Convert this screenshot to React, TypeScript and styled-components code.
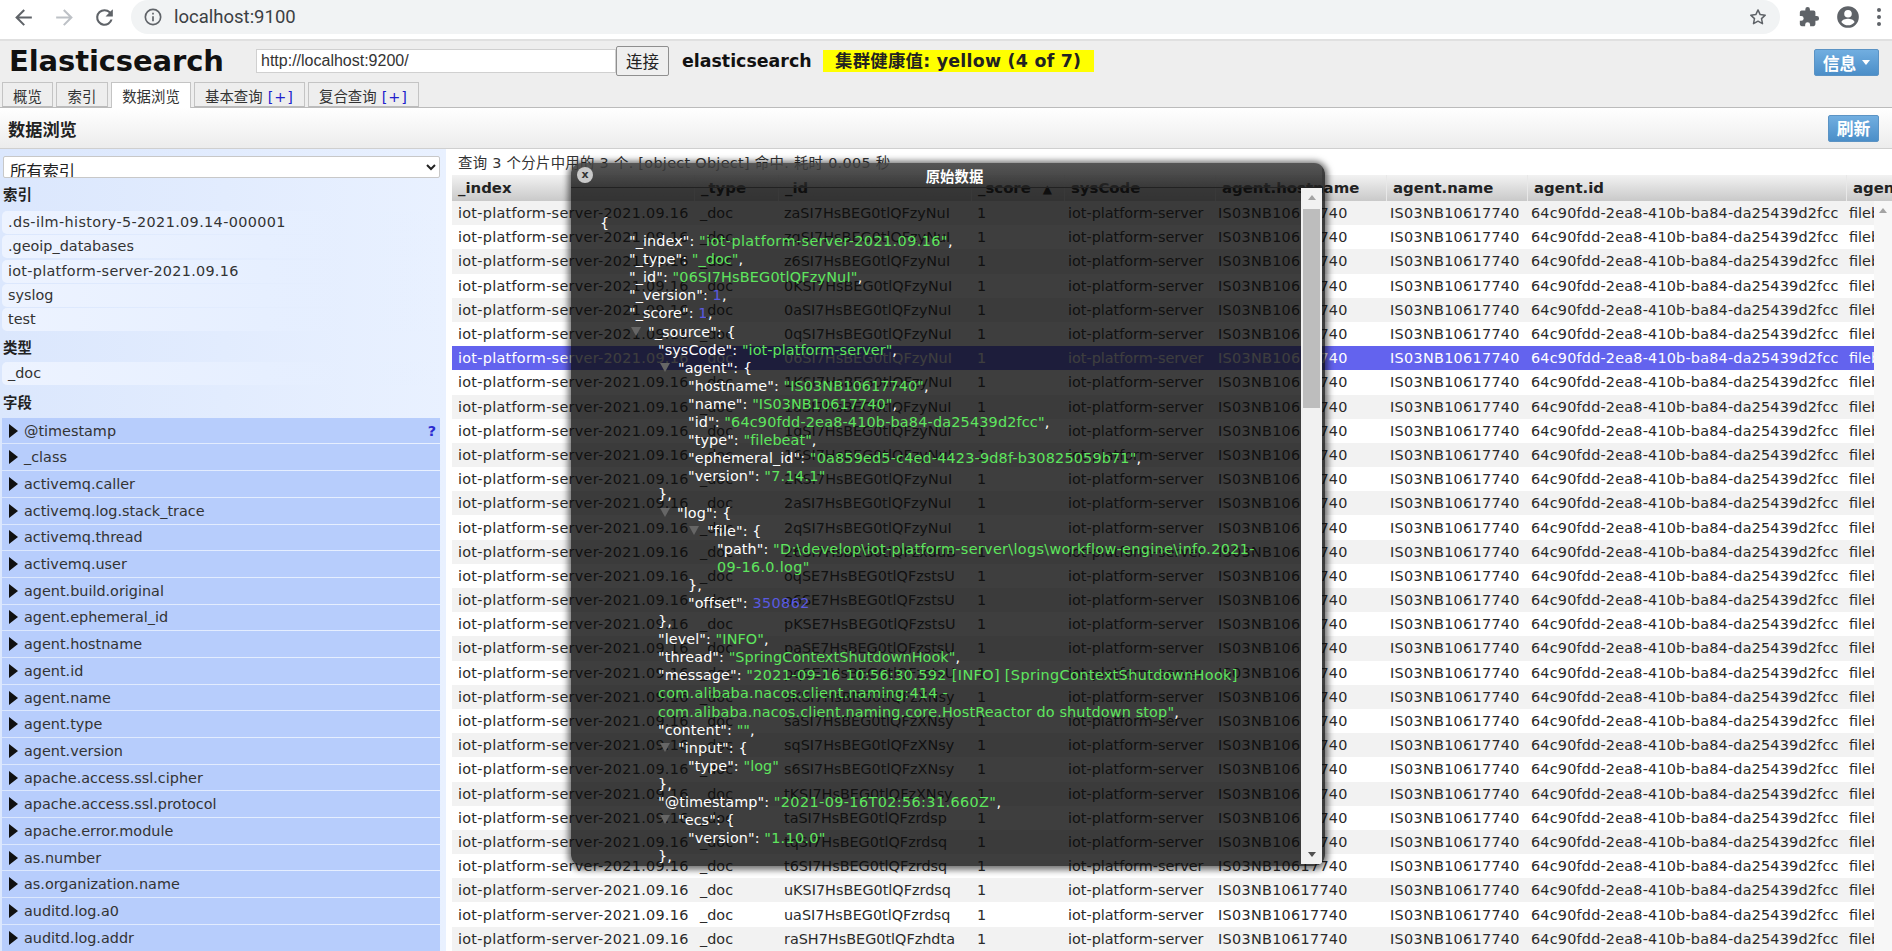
import React from "react";
import styled, { createGlobalStyle } from "styled-components";

const UI = `"DejaVu Sans", Verdana, "Noto Sans CJK SC", sans-serif`;
const CJK = `"Noto Sans CJK SC", "DejaVu Sans", sans-serif`;
const ROW = 750 / 31;

const Global = createGlobalStyle`
  html, body { margin: 0; padding: 0; height: 100%; overflow: hidden; background: #fff; }
  #root { height: 100%; }
  * { box-sizing: border-box; }
`;

const Page = styled.div`
  position: relative;
  width: 1892px;
  height: 951px;
  overflow: hidden;
  display: flex;
  flex-direction: column;
  font-family: ${UI};
  font-size: 14.4px;
  color: #2a2a2a;
`;

const BrowserBar = styled.div`
  height: 41px;
  flex: none;
  display: flex;
  align-items: flex-start;
  background: #fff;
  border-bottom: 2px solid #e0e0e0;
`;
const NavGroup = styled.div`
  width: 131px;
  height: 34px;
  flex: none;
  display: flex;
  align-items: center;
  gap: 15.5px;
  padding-left: 11px;
`;
const Omnibox = styled.div`
  width: 1649px;
  height: 34px;
  flex: none;
  display: flex;
  align-items: center;
  background: #f1f3f4;
  border-radius: 17px;
  padding: 0 12px 0 12px;
`;
const OmniText = styled.span`
  margin-left: 11px;
  flex: 1;
  font: 18.5px Roboto, "Liberation Sans", sans-serif;
  color: #3c4043;
`;
const ChromeActions = styled.div`
  flex: 1;
  height: 34px;
  display: flex;
  align-items: center;
  gap: 15px;
  padding-left: 18px;
`;

const TopBar = styled.div`
  height: 41px;
  flex: none;
  display: flex;
  align-items: center;
  background: #eeeeee;
  padding: 0 13px 1px 9px;
`;
const Brand = styled.h1`
  margin: 0 28px 0 0;
  width: 219px;
  flex: none;
  font: bold 29px ${UI};
  letter-spacing: -0.1px;
  color: #111;
  white-space: nowrap;
`;
const UrlInput = styled.input`
  width: 360px;
  height: 24px;
  flex: none;
  border: 1px solid #d0d0d0;
  background: #fff;
  padding: 0 4px;
  font: 16px "Liberation Sans", sans-serif;
  color: #333;
`;
const ConnectBtn = styled.button`
  width: 53px;
  height: 30px;
  flex: none;
  margin-right: 13px;
  border: 1px solid #8f8f8f;
  border-radius: 2px;
  background: #efefef;
  font: 16.5px ${CJK};
  color: #222;
  padding: 0;
`;
const ClusterName = styled.span`
  width: 141px;
  flex: none;
  font: bold 17.4px ${UI};
  color: #111;
`;
const Health = styled.span`
  width: 271px;
  height: 22px;
  flex: none;
  background: #ffff00;
  padding-left: 12px;
  font: bold 17.4px/22px "DejaVu Sans", "Noto Sans CJK SC", sans-serif;
  letter-spacing: 0.25px;
  color: #222;
  white-space: nowrap;
`;
const BlueBtn = styled.button<{ $w: number; $h: number; $drop?: number }>`
  width: ${(p) => p.$w}px;
  height: ${(p) => p.$h}px;
  margin-left: auto;
  margin-top: ${(p) => p.$drop ?? 0}px;
  flex: none;
  border: 1px solid #5b93c4;
  border-radius: 2px;
  background: linear-gradient(to bottom, #71aee0, #4b8ec8);
  color: #fff;
  font: bold 16.8px ${CJK};
  padding: 0;
  display: flex;
  align-items: center;
  justify-content: center;
  gap: 6px;
`;
const Caret = styled.span`
  width: 0;
  height: 0;
  border-left: 4px solid transparent;
  border-right: 4px solid transparent;
  border-top: 5px solid #fff;
`;

const TabRow = styled.div`
  height: 26px;
  flex: none;
  display: flex;
  align-items: flex-end;
  background: #eeeeee;
  border-bottom: 1px solid #bbb;
  padding-left: 2px;
  gap: 3px;
`;
const Tab = styled.div<{ $w: number; $active?: boolean }>`
  width: ${(p) => p.$w}px;
  height: ${(p) => (p.$active ? 26 : 25)}px;
  margin-bottom: ${(p) => (p.$active ? -1 : 0)}px;
  background: ${(p) => (p.$active ? "#fff" : "#eeeeee")};
  border: 1px solid #c4c4c4;
  border-bottom: ${(p) => (p.$active ? "none" : "1px solid #bbb")};
  text-align: center;
  font: 14.4px/25px ${CJK};
  color: #333;
  white-space: nowrap;
`;
const Plus = styled.span`
  color: #2222cc;
  margin-left: 5px;
  letter-spacing: 1px;
  font-family: "DejaVu Sans", sans-serif;
`;

const SectionBar = styled.div`
  height: 41px;
  flex: none;
  display: flex;
  align-items: center;
  padding: 0 13px 0 8px;
  background: linear-gradient(to bottom, #ffffff, #ececec);
  border-bottom: 1px solid #cfcfcf;
`;
const SectionTitle = styled.h2`
  margin: 0;
  font: bold 17.2px ${CJK};
  color: #222;
`;

const Body = styled.div`
  flex: 1;
  min-height: 0;
  display: flex;
`;
const Sidebar = styled.div`
  width: 446px;
  flex: none;
  padding: 7px 6px 0 2px;
  background: linear-gradient(to right, #dbe7fd, #e9f1ff);
  overflow: hidden;
`;
const IndexSelect = styled.select`
  width: 437px;
  height: 22px;
  margin-left: 1px;
  display: block;
  border: 1px solid #c8c8c8;
  border-radius: 2px;
  background: #fff;
  padding: 0 2px;
  font: 16.3px/20px ${CJK};
  color: #222;
`;
const SideLabel = styled.div<{ $h?: number }>`
  height: ${(p) => p.$h ?? 33}px;
  padding: 0 0 2px 1px;
  display: flex;
  align-items: center;
  font: bold 14.4px ${CJK};
  color: #222;
`;
const SideItem = styled.div<{ $ls?: number }>`
  height: 23px;
  margin-bottom: 1.3px;
  padding-left: 6px;
  border-radius: 5px 0 0 5px;
  background: linear-gradient(to right, #edf3ff, #e6efff 60%, rgba(230, 239, 255, 0));
  font-size: 14.4px;
  letter-spacing: ${(p) => p.$ls ?? 0}px;
  line-height: 23px;
  color: #333;
  white-space: nowrap;
`;
const FieldRow = styled.div`
  height: 25.7px;
  margin-bottom: 1px;
  width: 438px;
  display: flex;
  align-items: center;
  padding: 0 4px 0 7px;
  background: #b7cdfc;
  font-size: 14.4px;
  color: #333;
`;
const FieldArrow = styled.span`
  width: 0;
  height: 0;
  flex: none;
  margin-right: 6px;
  border-top: 7px solid transparent;
  border-bottom: 7px solid transparent;
  border-left: 9px solid #111;
`;
const FieldHelp = styled.span`
  margin-left: auto;
  font-weight: bold;
  color: #2a2ad0;
`;

const Main = styled.div`
  flex: 1;
  min-width: 0;
  padding-left: 6px;
  display: flex;
  flex-direction: column;
  background: #fff;
`;
const QueryInfo = styled.div`
  height: 26px;
  padding: 3px 0 0 6px;
  font: 14.4px/22px "DejaVu Sans", "Noto Sans CJK SC", sans-serif;
  letter-spacing: 0.3px;
  color: #333;
  white-space: nowrap;
`;
const HeadRow = styled.div`
  height: 26px;
  flex: none;
  display: grid;
  grid-template-columns: 242px 84px 193px 93px 151px 171px 141px 319px 60px;
  background: linear-gradient(to bottom, #f2f2f2, #c9c9c9);
  overflow: hidden;
`;
const HeadCell = styled.div<{ $first?: boolean }>`
  padding-left: 6px;
  border-left: ${(p) => (p.$first ? "none" : "1px solid #e8e8e8")};
  font-weight: bold;
  line-height: 26px;
  color: #222;
  white-space: nowrap;
  font-size: 14.9px;
`;
const SortMark = styled.span`
  margin-left: 12px;
  font-size: 12px;
`;
const TableScroller = styled.div`
  flex: 1;
  min-height: 0;
  display: flex;
`;
const Rows = styled.div`
  flex: 1;
  min-width: 0;
  overflow: hidden;
`;
const DataRow = styled.div<{ $selected?: boolean; $odd?: boolean }>`
  height: ${ROW}px;
  display: grid;
  grid-template-columns: 244px 84px 193px 91px 150px 172px 141px 318px 29px;
  align-items: center;
  white-space: nowrap;
  background: ${(p) => (p.$selected ? "#6363ee" : p.$odd ? "#f2f2f2" : "#fff")};
  color: ${(p) => (p.$selected ? "#fff" : "#2a2a2a")};
`;
const DataCell = styled.div<{ $first?: boolean; $ls?: number }>`
  padding-left: ${(p) => (p.$first ? 6 : 4)}px;
  letter-spacing: ${(p) => p.$ls ?? 0}px;
  overflow: hidden;
`;
const VTrack = styled.div`
  width: 18px;
  flex: none;
  background: #f7f7f7;
  display: flex;
  flex-direction: column;
  align-items: center;
  padding: 7px 0;
`;
const VArrow = styled.span<{ $up: boolean; $tone: string }>`
  width: 0;
  height: 0;
  border-left: 4.5px solid transparent;
  border-right: 4.5px solid transparent;
  ${(p) =>
    p.$up
      ? `border-bottom: 5px solid ${p.$tone};`
      : `border-top: 5px solid ${p.$tone};`}
`;

const Dialog = styled.div`
  position: absolute;
  left: 571px;
  top: 163px;
  width: 754px;
  height: 703px;
  border-radius: 11px;
  background: rgba(10, 10, 10, 0.79);
  box-shadow: 0 1px 6px 3px rgba(0, 0, 0, 0.55);
  display: flex;
  flex-direction: column;
  padding-right: 3px;
  overflow: hidden;
`;
const DialogHead = styled.div`
  height: 25px;
  flex: none;
  display: flex;
  align-items: center;
  justify-content: center;
  position: relative;
  padding-left: 16px;
  background: linear-gradient(to bottom, rgba(110, 110, 110, 0.5), rgba(60, 60, 60, 0.35));
  border-bottom: 1px solid #222;
  color: #fff;
  font: bold 14.4px ${CJK};
`;
const CloseDot = styled.span`
  position: absolute;
  left: 6px;
  top: 4px;
  width: 16px;
  height: 16px;
  border-radius: 50%;
  background: #c9c9c9;
  color: #333;
  font: bold 11px/15px ${UI};
  text-align: center;
`;
const DialogBody = styled.div`
  flex: 1;
  min-height: 0;
  display: flex;
  padding-bottom: 2px;
`;
const JsonPane = styled.div`
  flex: 1;
  min-width: 0;
  overflow: hidden;
  padding: 26px 0 0 29px;
  font-size: 14.4px;
  letter-spacing: 0.08px;
  line-height: 18.1px;
  color: #fff;
  white-space: pre;
`;
const JsonLine = styled.div<{ $indent: number }>`
  position: relative;
  padding-left: ${(p) => p.$indent}px;
`;
const Fold = styled.span<{ $at: number }>`
  position: absolute;
  left: ${(p) => p.$at}px;
  top: 4px;
  width: 0;
  height: 0;
  border-left: 5px solid transparent;
  border-right: 5px solid transparent;
  border-top: 9px solid #666;
`;
const Str = styled.span<{ $ls?: number }>`
  color: #5ee65e;
  letter-spacing: ${(p) => p.$ls ?? 0.08}px;
`;
const Num = styled.span`
  color: #5a5ae0;
  letter-spacing: 0.4px;
`;
const DlgTrack = styled.div`
  width: 21px;
  flex: none;
  background: #f1f1f1;
  padding: 7px 2px;
  display: flex;
  flex-direction: column;
  align-items: center;
`;
const DlgThumb = styled.div`
  width: 17px;
  height: 199px;
  margin: 9px 0 auto;
  background: #bdbdbd;
`;

const ids = [
  "zaSI7HsBEG0tlQFzyNuI", "zqSI7HsBEG0tlQFzyNuI", "z6SI7HsBEG0tlQFzyNuI", "0KSI7HsBEG0tlQFzyNuI",
  "0aSI7HsBEG0tlQFzyNuI", "0qSI7HsBEG0tlQFzyNuI", "06SI7HsBEG0tlQFzyNuI", "1KSI7HsBEG0tlQFzyNuI",
  "1aSI7HsBEG0tlQFzyNuI", "1qSI7HsBEG0tlQFzyNuI", "16SI7HsBEG0tlQFzyNuI", "2KSI7HsBEG0tlQFzyNuI",
  "2aSI7HsBEG0tlQFzyNuI", "2qSI7HsBEG0tlQFzyNuI", "26SI7HsBEG0tlQFzxduB", "oqSE7HsBEG0tlQFzstsU",
  "o6SE7HsBEG0tlQFzstsU", "pKSE7HsBEG0tlQFzstsU", "paSE7HsBEG0tlQFzstsU", "pqSE7HsBEG0tlQFzstsU",
  "sKSI7HsBEG0tlQFzXNsy", "saSI7HsBEG0tlQFzXNsy", "sqSI7HsBEG0tlQFzXNsy", "s6SI7HsBEG0tlQFzXNsy",
  "tKSI7HsBEG0tlQFzXNsy", "taSI7HsBEG0tlQFzrdsp", "tqSI7HsBEG0tlQFzrdsq", "t6SI7HsBEG0tlQFzrdsq",
  "uKSI7HsBEG0tlQFzrdsq", "uaSI7HsBEG0tlQFzrdsq", "raSH7HsBEG0tlQFzhdta",
];

const fields = [
  "@timestamp", "_class", "activemq.caller", "activemq.log.stack_trace", "activemq.thread",
  "activemq.user", "agent.build.original", "agent.ephemeral_id", "agent.hostname", "agent.id",
  "agent.name", "agent.type", "agent.version", "apache.access.ssl.cipher",
  "apache.access.ssl.protocol", "apache.error.module", "as.number", "as.organization.name",
  "auditd.log.a0", "auditd.log.addr",
];

type Seg = { k?: string; s?: string; n?: string; t?: string; ls?: number };
type Line = { i: number; fold?: number; segs: Seg[] };

const jsonLines: Line[] = [
  { i: 0, segs: [{ t: "{" }] },
  { i: 29, segs: [{ k: '"_index": ' }, { s: '"iot-platform-server-2021.09.16"', ls: 0.42 }, { t: "," }] },
  { i: 29, segs: [{ k: '"_type": ' }, { s: '"_doc"' }, { t: "," }] },
  { i: 29, segs: [{ k: '"_id": ' }, { s: '"06SI7HsBEG0tlQFzyNuI"', ls: 0.18 }, { t: "," }] },
  { i: 29, segs: [{ k: '"_version": ' }, { n: "1" }, { t: "," }] },
  { i: 29, segs: [{ k: '"_score": ' }, { n: "1" }, { t: "," }] },
  { i: 48, fold: 31, segs: [{ k: '"_source": {' }] },
  { i: 58, segs: [{ k: '"sysCode": ' }, { s: '"iot-platform-server"' }, { t: "," }] },
  { i: 78, fold: 60, segs: [{ k: '"agent": {' }] },
  { i: 88, segs: [{ k: '"hostname": ' }, { s: '"IS03NB10617740"', ls: 0.1 }, { t: "," }] },
  { i: 88, segs: [{ k: '"name": ' }, { s: '"IS03NB10617740"', ls: 0.1 }, { t: "," }] },
  { i: 88, segs: [{ k: '"id": ' }, { s: '"64c90fdd-2ea8-410b-ba84-da25439d2fcc"', ls: 0.18 }, { t: "," }] },
  { i: 88, segs: [{ k: '"type": ' }, { s: '"filebeat"' }, { t: "," }] },
  { i: 88, segs: [{ k: '"ephemeral_id": ' }, { s: '"0a859ed5-c4ed-4423-9d8f-b30825059b71"', ls: 0.18 }, { t: "," }] },
  { i: 88, segs: [{ k: '"version": ' }, { s: '"7.14.1"', ls: 0.3 }] },
  { i: 58, segs: [{ t: "}," }] },
  { i: 77, fold: 60, segs: [{ k: '"log": {' }] },
  { i: 107, fold: 89, segs: [{ k: '"file": {' }] },
  { i: 117, segs: [{ k: '"path": ' }, { s: '"D:\\develop\\iot-platform-server\\logs\\workflow-engine\\info.2021-\n09-16.0.log"', ls: 0.33 }] },
  { i: 88, segs: [{ t: "}," }] },
  { i: 88, segs: [{ k: '"offset": ' }, { n: "350862" }] },
  { i: 58, segs: [{ t: "}," }] },
  { i: 58, segs: [{ k: '"level": ' }, { s: '"INFO"' }, { t: "," }] },
  { i: 58, segs: [{ k: '"thread": ' }, { s: '"SpringContextShutdownHook"' }, { t: "," }] },
  {
    i: 58,
    segs: [
      { k: '"message": ' },
      { s: '"2021-09-16 10:56:30.592 [INFO] [SpringContextShutdownHook]\n', ls: 0.38 },
      { s: "com.alibaba.nacos.client.naming:414 -\n", ls: 0.28 },
      { s: 'com.alibaba.nacos.client.naming.core.HostReactor do shutdown stop"', ls: 0.16 },
      { t: "," },
    ],
  },
  { i: 58, segs: [{ k: '"content": ' }, { s: '""' }, { t: "," }] },
  { i: 78, fold: 60, segs: [{ k: '"input": {' }] },
  { i: 88, segs: [{ k: '"type": ' }, { s: '"log"' }] },
  { i: 58, segs: [{ t: "}," }] },
  { i: 58, segs: [{ k: '"@timestamp": ' }, { s: '"2021-09-16T02:56:31.660Z"', ls: 0.4 }, { t: "," }] },
  { i: 78, fold: 60, segs: [{ k: '"ecs": {' }] },
  { i: 88, segs: [{ k: '"version": ' }, { s: '"1.10.0"', ls: 0.3 }] },
  { i: 58, segs: [{ t: "}," }] },
];

const Icon = styled.svg<{ $flip?: boolean }>`
  display: block;
  flex: none;
  transform: ${(p) => (p.$flip ? "scaleX(-1)" : "none")};
`;

const BackIcon = ({ color, flip }: { color: string; flip?: boolean }) => (
  <Icon width="25" height="25" viewBox="0 0 24 24" $flip={flip}>
    <path d="M20 11H7.8l5.6-5.6L12 4l-8 8 8 8 1.4-1.4L7.8 13H20z" fill={color} />
  </Icon>
);
const ReloadIcon = () => (
  <Icon width="25" height="25" viewBox="0 0 24 24">
    <path
      d="M17.65 6.35A7.96 7.96 0 0 0 12 4a8 8 0 1 0 7.73 10h-2.08A6 6 0 1 1 12 6c1.66 0 3.14.69 4.22 1.78L13 11h7V4z"
      fill="#5f6368"
    />
  </Icon>
);
const InfoIcon = () => (
  <Icon width="20" height="20" viewBox="0 0 24 24">
    <circle cx="12" cy="12" r="9.2" fill="none" stroke="#5f6368" strokeWidth="2" />
    <path d="M11 7h2v2h-2zM11 11h2v6h-2z" fill="#5f6368" />
  </Icon>
);
const StarIcon = () => (
  <Icon width="20" height="20" viewBox="0 0 24 24">
    <path
      d="M12 3.5l2.6 5.6 6.1.7-4.5 4.2 1.2 6-5.4-3-5.4 3 1.2-6-4.5-4.2 6.1-.7z"
      fill="none"
      stroke="#5f6368"
      strokeWidth="1.8"
      strokeLinejoin="round"
    />
  </Icon>
);
const PuzzleIcon = () => (
  <Icon width="22" height="22" viewBox="0 0 24 24">
    <path
      d="M20.5 11H19V7a2 2 0 0 0-2-2h-4V3.5a2.5 2.5 0 0 0-5 0V5H4a2 2 0 0 0-2 2v3.8h1.5a2.7 2.7 0 0 1 0 5.4H2V20a2 2 0 0 0 2 2h3.8v-1.5a2.7 2.7 0 0 1 5.4 0V22H17a2 2 0 0 0 2-2v-4h1.5a2.5 2.5 0 0 0 0-5z"
      fill="#5f6368"
    />
  </Icon>
);
const AccountIcon = () => (
  <Icon width="26" height="26" viewBox="0 0 24 24">
    <path
      d="M12 2a10 10 0 1 0 0 20 10 10 0 0 0 0-20zm0 3.5a3.5 3.5 0 1 1 0 7 3.5 3.5 0 0 1 0-7zm0 14.2a7.7 7.7 0 0 1-6-2.9c.03-2 4-3.1 6-3.1s5.97 1.1 6 3.1a7.7 7.7 0 0 1-6 2.9z"
      fill="#5f6368"
    />
  </Icon>
);
const DotsIcon = () => (
  <Icon width="6" height="20" viewBox="0 0 6 20">
    <circle cx="3" cy="3" r="2" fill="#5f6368" />
    <circle cx="3" cy="10" r="2" fill="#5f6368" />
    <circle cx="3" cy="17" r="2" fill="#5f6368" />
  </Icon>
);

export default function App() {
  return (
    <Page>
      <Global />
      <BrowserBar>
        <NavGroup>
          <BackIcon color="#5f6368" />
          <BackIcon color="#bdc1c6" flip />
          <ReloadIcon />
        </NavGroup>
        <Omnibox>
          <InfoIcon />
          <OmniText>localhost:9100</OmniText>
          <StarIcon />
        </Omnibox>
        <ChromeActions>
          <PuzzleIcon />
          <AccountIcon />
          <DotsIcon />
        </ChromeActions>
      </BrowserBar>

      <TopBar>
        <Brand>Elasticsearch</Brand>
        <UrlInput defaultValue="http://localhost:9200/" />
        <ConnectBtn>连接</ConnectBtn>
        <ClusterName>elasticsearch</ClusterName>
        <Health>集群健康值: yellow (4 of 7)</Health>
        <BlueBtn $w={65} $h={27} $drop={3}>
          信息 <Caret />
        </BlueBtn>
      </TopBar>

      <TabRow>
        <Tab $w={51}>概览</Tab>
        <Tab $w={52}>索引</Tab>
        <Tab $w={80} $active>
          数据浏览
        </Tab>
        <Tab $w={111}>
          基本查询<Plus>[+]</Plus>
        </Tab>
        <Tab $w={111}>
          复合查询<Plus>[+]</Plus>
        </Tab>
      </TabRow>

      <SectionBar>
        <SectionTitle>数据浏览</SectionTitle>
        <BlueBtn $w={51} $h={27}>
          刷新
        </BlueBtn>
      </SectionBar>

      <Body>
        <Sidebar>
          <IndexSelect defaultValue="all">
            <option value="all">所有索引</option>
          </IndexSelect>
          <SideLabel>索引</SideLabel>
          <SideItem $ls={0.37}>.ds-ilm-history-5-2021.09.14-000001</SideItem>
          <SideItem>.geoip_databases</SideItem>
          <SideItem $ls={0.28}>iot-platform-server-2021.09.16</SideItem>
          <SideItem>syslog</SideItem>
          <SideItem>test</SideItem>
          <SideLabel $h={30}>类型</SideLabel>
          <SideItem>_doc</SideItem>
          <SideLabel $h={31}>字段</SideLabel>
          {fields.map((f, i) => (
            <FieldRow key={f}>
              <FieldArrow />
              {f}
              {i === 0 && <FieldHelp>?</FieldHelp>}
            </FieldRow>
          ))}
        </Sidebar>

        <Main>
          <QueryInfo>查询 3 个分片中用的 3 个. [object Object] 命中. 耗时 0.005 秒</QueryInfo>
          <HeadRow>
            <HeadCell $first>_index</HeadCell>
            <HeadCell>_type</HeadCell>
            <HeadCell>_id</HeadCell>
            <HeadCell>
              _score<SortMark>▲</SortMark>
            </HeadCell>
            <HeadCell>sysCode</HeadCell>
            <HeadCell>agent.hostname</HeadCell>
            <HeadCell>agent.name</HeadCell>
            <HeadCell>agent.id</HeadCell>
            <HeadCell>agent.type</HeadCell>
          </HeadRow>
          <TableScroller>
            <Rows>
              {ids.map((id, i) => (
                <DataRow key={id} $odd={i % 2 === 0} $selected={i === 6}>
                  <DataCell $first $ls={0.28}>
                    iot-platform-server-2021.09.16
                  </DataCell>
                  <DataCell>_doc</DataCell>
                  <DataCell>{id}</DataCell>
                  <DataCell>1</DataCell>
                  <DataCell>iot-platform-server</DataCell>
                  <DataCell $ls={0.3}>IS03NB10617740</DataCell>
                  <DataCell $ls={0.3}>IS03NB10617740</DataCell>
                  <DataCell $ls={0.2}>64c90fdd-2ea8-410b-ba84-da25439d2fcc</DataCell>
                  <DataCell>filebeat</DataCell>
                </DataRow>
              ))}
            </Rows>
            <VTrack>
              <VArrow $up $tone="#a3a3a3" />
            </VTrack>
          </TableScroller>
        </Main>
      </Body>

      <Dialog>
        <DialogHead>
          <CloseDot>x</CloseDot>
          原始数据
        </DialogHead>
        <DialogBody>
          <JsonPane>
            {jsonLines.map((l, i) => (
              <JsonLine key={i} $indent={l.i}>
                {l.fold !== undefined && <Fold $at={l.fold} />}
                {l.segs.map((s, j) =>
                  s.s ? (
                    <Str key={j} $ls={s.ls}>
                      {s.s}
                    </Str>
                  ) : s.n ? (
                    <Num key={j}>{s.n}</Num>
                  ) : (
                    <span key={j}>{s.k ?? s.t}</span>
                  )
                )}
              </JsonLine>
            ))}
          </JsonPane>
          <DlgTrack>
            <VArrow $up $tone="#a3a3a3" />
            <DlgThumb />
            <VArrow $up={false} $tone="#505050" />
          </DlgTrack>
        </DialogBody>
      </Dialog>
    </Page>
  );
}
